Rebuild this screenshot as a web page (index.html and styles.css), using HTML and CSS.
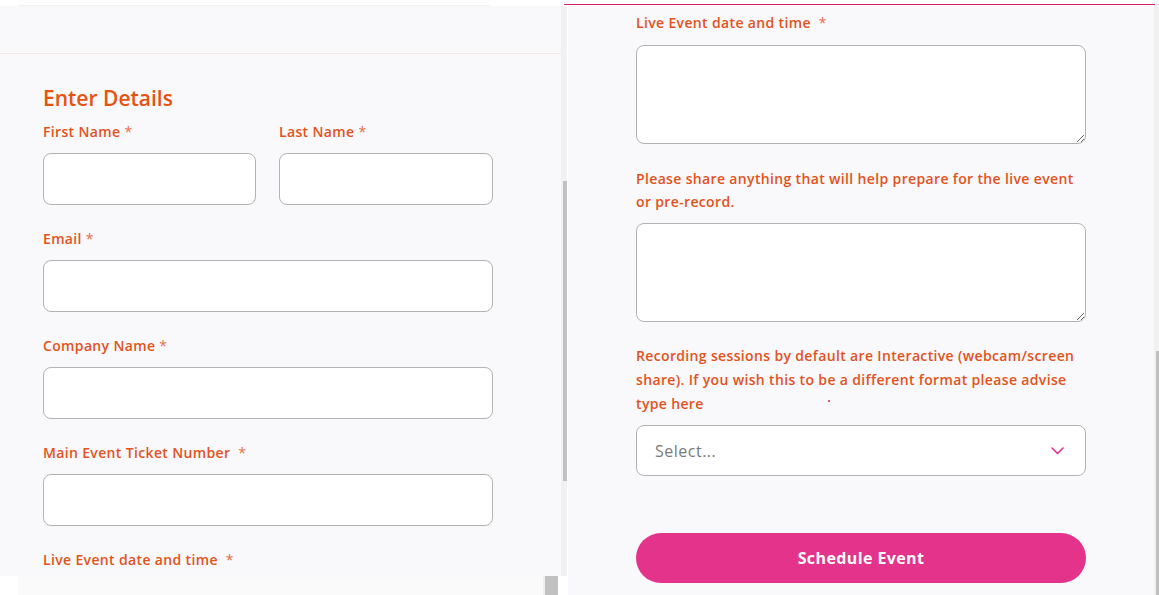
FILE: index.html
```html
<!DOCTYPE html>
<html lang="en">
<head>
<meta charset="utf-8">
<title>Schedule Event</title>
<link rel="stylesheet" href="styles.css">
</head>
<body>
<div class="screen">
  <section class="pane pane-left">
    <div class="top-strip"><span class="top-line"></span></div>
    <div class="left-body">
      <div class="left-content">
        <div class="left-header"></div>
        <form class="form form-left">
          <h2 class="title">Enter Details</h2>
          <div class="row-2">
            <div class="field">
              <label class="label">First Name <span class="req">*</span></label>
              <input class="input" type="text">
            </div>
            <div class="field">
              <label class="label">Last Name <span class="req">*</span></label>
              <input class="input" type="text">
            </div>
          </div>
          <div class="field">
            <label class="label">Email <span class="req">*</span></label>
            <input class="input" type="email">
          </div>
          <div class="field">
            <label class="label">Company Name <span class="req">*</span></label>
            <input class="input" type="text">
          </div>
          <div class="field">
            <label class="label">Main Event Ticket Number &nbsp;<span class="req">*</span></label>
            <input class="input" type="text">
          </div>
          <div class="field">
            <label class="label">Live Event date and time &nbsp;<span class="req">*</span></label>
            <textarea class="textarea"></textarea>
          </div>
        </form>
      </div>
      <div class="vscroll vscroll-left"><div class="thumb thumb-left"></div></div>
    </div>
    <div class="bottom-strip">
      <span class="bs-white"></span>
      <span class="bs-track"></span>
      <span class="bs-edge"></span>
      <span class="bs-thumb"></span>
    </div>
  </section>

  <section class="pane pane-right">
    <div class="right-top"></div>
    <div class="right-body">
      <form class="form form-right">
        <div class="field f-r1">
          <label class="label">Live Event date and time &nbsp;<span class="req">*</span></label>
          <textarea class="textarea"></textarea>
        </div>
        <div class="field f-r2">
          <label class="label">Please share anything that will help prepare for the live event or pre-record.</label>
          <textarea class="textarea"></textarea>
        </div>
        <div class="field f-r3">
          <label class="label label-wide">Recording sessions by default are Interactive (webcam/screen share). If you wish this to be a different format please advise type here<span class="dot"></span></label>
          <div class="select">
            <span class="select-ph">Select...</span>
            <svg class="chev" width="13" height="8" viewBox="0 0 13 8" aria-hidden="true"><polyline points="1,1 6.5,6.5 12,1" fill="none" stroke="#e3338a" stroke-width="1.6" stroke-linecap="round" stroke-linejoin="round"/></svg>
          </div>
        </div>
        <button type="button" class="btn">Schedule Event</button>
      </form>
      <div class="vscroll vscroll-right"><div class="thumb thumb-right"></div></div>
    </div>
  </section>
</div>
</body>
</html>
```

FILE: styles.css
```css
* { box-sizing: border-box; }

html, body {
  margin: 0;
  padding: 0;
  background: #ffffff;
}

body {
  font-family: "Open Sans", "Noto Sans", Arial, sans-serif;
  width: 1159px;
  height: 595px;
  overflow: hidden;
}

.screen {
  display: flex;
  width: 1159px;
  height: 595px;
}

/* ---------- left pane ---------- */
.pane-left {
  width: 567px;
  display: flex;
  flex-direction: column;
  flex-shrink: 0;
}

.top-strip {
  height: 6px;
  display: flex;
  align-items: flex-end;
  padding-left: 18px;
}
.top-line {
  display: block;
  width: 472px;
  height: 1px;
  background: #f1f1f3;
}

.left-body {
  height: 570px;
  display: flex;
  overflow: hidden;
}

.left-content {
  width: 561px;
  background: #f9f9fb;
  overflow: hidden;
}

.left-header {
  height: 48px;
  border-bottom: 1px solid #f4e6e3;
}

.form-left {
  padding: 30px 0 0 43px;
  width: 493px;
}

.title {
  margin: 0 0 8px;
  font-size: 21px;
  line-height: 28px;
  font-weight: 600;
  color: #e8520f;
  letter-spacing: 0;
}

.row-2 {
  display: grid;
  grid-template-columns: 213px 214px;
  column-gap: 23px;
}

.field {
  display: flex;
  flex-direction: column;
}

.form-left .field {
  margin-bottom: 22px;
}

.label {
  display: block;
  font-size: 14px;
  line-height: 24px;
  font-weight: 600;
  letter-spacing: 0.35px;
  color: #e4521c;
  margin-bottom: 9px;
}

.req {
  font-weight: 400;
  color: #ec6a45;
}

.input {
  display: block;
  width: 100%;
  height: 52px;
  border: 1px solid #b3b3b3;
  border-radius: 8px;
  background: #ffffff;
  margin: 0;
  padding: 0 16px;
  font: inherit;
}

.textarea {
  display: block;
  width: 450px;
  height: 99px;
  border: 1px solid #b3b3b3;
  border-radius: 8px;
  background: #ffffff;
  margin: 0;
  padding: 8px 16px;
  font: inherit;
  resize: vertical;
}

.vscroll {
  background: #f1f1f1;
  display: flex;
  flex-direction: column;
  align-items: flex-end;
}

.vscroll-left {
  width: 6px;
}

.thumb {
  background: #c1c1c1;
}

.thumb-left {
  width: 4px;
  height: 300px;
  margin-top: 175px;
}

.bottom-strip {
  height: 19px;
  display: flex;
}
.bs-white { width: 18px; background: #ffffff; }
.bs-track { width: 525px; background: #fafafa; }
.bs-edge { width: 2px; background: #eeeeee; }
.bs-thumb { width: 13px; background: #c1c1c1; }

/* ---------- right pane ---------- */
.pane-right {
  width: 591px;
  margin-left: 1px;
  display: flex;
  flex-direction: column;
}

.right-top {
  height: 5px;
  border-bottom: 1px solid #d81e6c;
  margin-right: 4px;
  margin-left: -4px;
}

.right-body {
  flex: 1;
  display: flex;
  background: #f9f9fb;
  overflow: hidden;
}

.form-right {
  width: 586px;
  padding: 6px 0 0 68px;
}

.form-right .label {
  line-height: 23px;
  width: 450px;
  margin-bottom: 11px;
  position: relative;
}

.f-r2 .label {
  margin-bottom: 10px;
}

.form-right .label-wide {
  line-height: 24px;
  margin-bottom: 9px;
}

.f-r1 { margin-bottom: 23px; }
.f-r2 { margin-bottom: 22px; }
.f-r3 { margin-bottom: 57px; }

.dot {
  position: absolute;
  left: 192px;
  top: 56px;
  width: 2px;
  height: 2px;
  border-radius: 50%;
  background: #e0203a;
}

.select {
  width: 450px;
  height: 51px;
  border: 1px solid #b3b3b3;
  border-radius: 8px;
  background: #ffffff;
  display: flex;
  align-items: center;
  justify-content: space-between;
  padding: 0 21px 0 18px;
}

.select-ph {
  font-size: 16px;
  letter-spacing: 0.5px;
  color: #7a7a7a;
  font-weight: 400;
}

.chev {
  display: block;
}

.btn {
  display: block;
  width: 450px;
  height: 50px;
  border: 0;
  border-radius: 25px;
  background: #e3338a;
  color: #ffffff;
  font-family: inherit;
  font-size: 16px;
  font-weight: 700;
  letter-spacing: 0.4px;
  padding: 0;
  cursor: pointer;
}

.vscroll-right {
  width: 5px;
  margin-left: auto;
}

.thumb-right {
  width: 3px;
  height: 260px;
  margin-top: 346px;
}
```
